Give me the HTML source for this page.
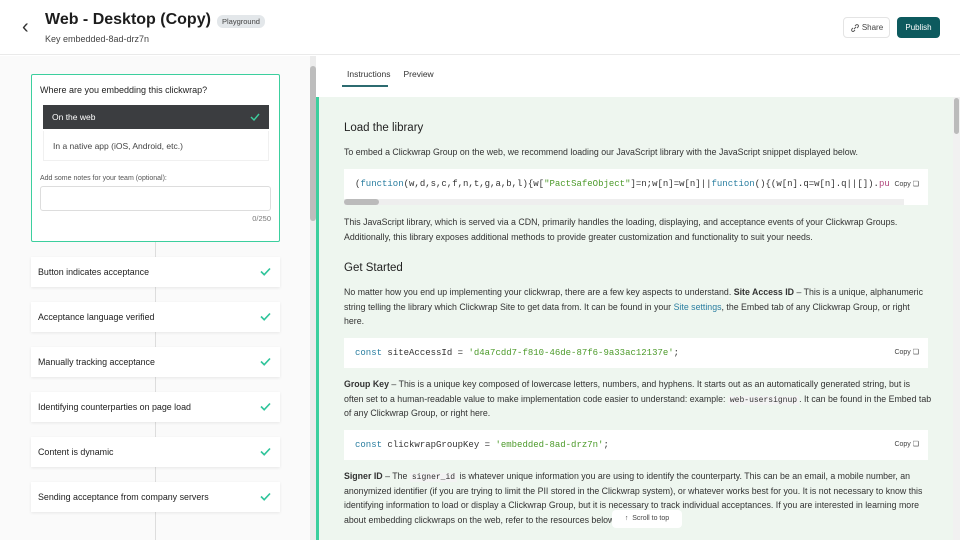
<!DOCTYPE html>
<html><head><meta charset="utf-8"><style>
*{box-sizing:border-box;margin:0;padding:0}
body{width:960px;height:540px;overflow:hidden;background:#fff;font-family:"Liberation Sans",sans-serif;color:#222;position:relative}
.hdr{position:absolute;left:0;top:0;width:960px;height:55px;border-bottom:1px solid #eaeaea;background:#fff}
.back{position:absolute;left:22px;top:16px;font-size:20px;color:#333}
.title{position:absolute;left:45px;top:11px;font-size:16px;font-weight:bold;color:#1d1d1d}
.badge{position:absolute;left:217px;top:15px;background:#e3e7ea;color:#444;font-size:7.5px;padding:2px 5px;border-radius:6px}
.key{position:absolute;left:45px;top:34px;font-size:9px;color:#444}
.share{position:absolute;left:843px;top:17px;width:47px;height:21px;border:1px solid #e4e4e4;border-radius:4px;font-size:8px;color:#444;line-height:19px;text-align:center;padding-left:12px}
.pub{position:absolute;left:897px;top:17px;width:43px;height:21px;background:#0d5a5e;border-radius:4px;font-size:8px;color:#fff;line-height:21px;text-align:center}
.left{position:absolute;left:0;top:56px;width:310px;height:484px;background:#fafafa}
.sb1{position:absolute;left:310px;top:66px;width:6px;height:155px;background:#bdbdbd;border-radius:3px}
.sbtrack{position:absolute;left:310px;top:56px;width:6px;height:484px;background:#ececec}
.card{position:absolute;left:31px;top:74px;width:249px;height:168px;border:1.5px solid #3ccf9e;background:#fff;border-radius:2px}
.card .q{position:absolute;left:8px;top:10px;font-size:9px;color:#222}
.opt1{position:absolute;left:11px;top:30px;width:226px;height:24px;background:#3b3d40;color:#fff;font-size:8.5px;line-height:24px;padding-left:9px}
.opt2{position:absolute;left:11px;top:56px;width:226px;height:30px;color:#444;font-size:8.5px;line-height:30px;padding-left:9px;border:1px solid #f0f0f0;border-top:none}
.notes{position:absolute;left:8px;top:100px;font-size:7px;color:#555}
.ta{position:absolute;left:8px;top:111px;width:231px;height:25px;border:1px solid #ddd;border-radius:3px}
.cnt{position:absolute;right:8px;top:139px;font-size:7.5px;color:#777}
.vline{position:absolute;left:155px;top:242px;width:1px;height:298px;background:#ddd}
.item{position:absolute;left:31px;width:249px;height:30px;background:#fff;box-shadow:0 1px 3px rgba(0,0,0,.08);font-size:8.9px;color:#222;line-height:30px;padding-left:7px}
.item svg{position:absolute;right:9px;top:10px}
.tabs{position:absolute;left:342px;top:69px;font-size:8.5px;color:#333}
.tabline{position:absolute;left:342px;top:85px;width:46px;height:2px;background:#2c6b70}
.main{position:absolute;left:316px;top:97px;width:637px;height:443px;background:#eef6ef;border-left:3px solid #3ccf9e}
.rsb{position:absolute;left:953px;top:97px;width:7px;height:443px;background:#f1f1f1}
.rsb div{width:5px;height:36px;background:#bbb;border-radius:3px;margin:1px}
.m{position:absolute;left:344px;font-size:8.8px;color:#333;line-height:14.5px;width:588px}
h2{position:absolute;left:344px;font-size:11.5px;font-weight:normal;color:#222}
.code{position:absolute;left:344px;width:584px;background:#fff;font-family:"Liberation Mono",monospace;font-size:9px;color:#333;padding-left:11px;white-space:nowrap;overflow:hidden}
.copy{position:absolute;right:9px;font-family:"Liberation Sans",sans-serif;font-size:7px;color:#444;background:#fff;padding-left:4px}
.kw{color:#2a7ea0}.st{color:#4c9a2a}.pk{color:#b0457a}
.ic{font-family:"Liberation Mono",monospace;background:#f3f3f3;padding:0 2px;font-size:8px;line-height:1}
.stt{position:absolute;left:612px;top:510px;width:70px;height:18px;background:#fff;border-radius:4px;font-size:7px;color:#444;line-height:18px;text-align:center}
</style></head><body>
<div class="hdr">
<div class="back">&#8249;</div>
<div class="title">Web - Desktop (Copy)</div>
<div class="badge">Playground</div>
<div class="key">Key embedded-8ad-drz7n</div>
<div class="share"><svg style="position:absolute;left:7px;top:6px" width="8" height="8"><path d="M3 5l2-2M2 4l-1 1a1.4 1.4 0 002 2l1-1M6 4l1-1a1.4 1.4 0 00-2-2L4 2" stroke="#555" stroke-width=".9" fill="none"/></svg>Share</div>
<div class="pub">Publish</div>
</div>
<div class="left"></div>
<div class="sbtrack"></div><div class="sb1"></div>
<div class="vline"></div>
<div class="card">
<div class="q">Where are you embedding this clickwrap?</div>
<div class="opt1">On the web<svg style="position:absolute;right:9px;top:8px" width="10" height="8"><path d="M1 4l3 3 5-6" stroke="#3ccf9e" stroke-width="1.4" fill="none"/></svg></div>
<div class="opt2">In a native app (iOS, Android, etc.)</div>
<div class="notes">Add some notes for your team (optional):</div>
<div class="ta"></div>
<div class="cnt">0/250</div>
</div>
<div class="item" style="top:257px">Button indicates acceptance<svg width="11" height="9"><path d="M1 4.5l3.2 3.2L10 1.5" stroke="#2ec49a" stroke-width="1.6" fill="none"/></svg></div>
<div class="item" style="top:302px">Acceptance language verified<svg width="11" height="9"><path d="M1 4.5l3.2 3.2L10 1.5" stroke="#2ec49a" stroke-width="1.6" fill="none"/></svg></div>
<div class="item" style="top:347px">Manually tracking acceptance<svg width="11" height="9"><path d="M1 4.5l3.2 3.2L10 1.5" stroke="#2ec49a" stroke-width="1.6" fill="none"/></svg></div>
<div class="item" style="top:392px">Identifying counterparties on page load<svg width="11" height="9"><path d="M1 4.5l3.2 3.2L10 1.5" stroke="#2ec49a" stroke-width="1.6" fill="none"/></svg></div>
<div class="item" style="top:437px">Content is dynamic<svg width="11" height="9"><path d="M1 4.5l3.2 3.2L10 1.5" stroke="#2ec49a" stroke-width="1.6" fill="none"/></svg></div>
<div class="item" style="top:482px">Sending acceptance from company servers<svg width="11" height="9"><path d="M1 4.5l3.2 3.2L10 1.5" stroke="#2ec49a" stroke-width="1.6" fill="none"/></svg></div>
<div class="tabs"><span style="margin-left:5px">Instructions</span><span style="margin-left:13px">Preview</span></div>
<div class="tabline"></div>
<div class="main"></div>
<div class="rsb"><div></div></div>
<h2 style="top:122px">Load the library</h2>
<div class="m" style="top:145px">To embed a Clickwrap Group on the web, we recommend loading our JavaScript library with the JavaScript snippet displayed below.</div>
<div class="code" style="top:169px;height:36px;line-height:31px">(<span class="kw">function</span>(w,d,s,c,f,n,t,g,a,b,l){w[<span class="st">"PactSafeObject"</span>]=n;w[n]=w[n]||<span class="kw">function</span>(){(w[n].q=w[n].q||[]).<span class="pk">push</span>
<span class="copy" style="top:0">Copy &#10063;</span>
<div style="position:absolute;left:0;bottom:0;width:560px;height:6px;background:#eee"><div style="width:35px;height:6px;background:#bbb;border-radius:3px"></div></div></div>
<div class="m" style="top:215px">This JavaScript library, which is served via a CDN, primarily handles the loading, displaying, and acceptance events of your Clickwrap Groups. Additionally, this library exposes additional methods to provide greater customization and functionality to suit your needs.</div>
<h2 style="top:262px">Get Started</h2>
<div class="m" style="top:285px">No matter how you end up implementing your clickwrap, there are a few key aspects to understand. <b>Site Access ID</b> – This is a unique, alphanumeric string telling the library which Clickwrap Site to get data from. It can be found in your <span style="color:#2a7ea0">Site settings</span>, the Embed tab of any Clickwrap Group, or right here.</div>
<div class="code" style="top:338px;height:30px;line-height:30px"><span class="kw">const</span> siteAccessId = <span class="st">'d4a7cdd7-f810-46de-87f6-9a33ac12137e'</span>;<span class="copy">Copy &#10063;</span></div>
<div class="m" style="top:377px"><b>Group Key</b> – This is a unique key composed of lowercase letters, numbers, and hyphens. It starts out as an automatically generated string, but is often set to a human-readable value to make implementation code easier to understand: example: <span class="ic">web-usersignup</span>. It can be found in the Embed tab of any Clickwrap Group, or right here.</div>
<div class="code" style="top:430px;height:30px;line-height:30px"><span class="kw">const</span> clickwrapGroupKey = <span class="st">'embedded-8ad-drz7n'</span>;<span class="copy">Copy &#10063;</span></div>
<div class="m" style="top:469px"><b>Signer ID</b> – The <span class="ic">signer_id</span> is whatever unique information you are using to identify the counterparty. This can be an email, a mobile number, an anonymized identifier (if you are trying to limit the PII stored in the Clickwrap system), or whatever works best for you. It is not necessary to know this identifying information to load or display a Clickwrap Group, but it is necessary to track individual acceptances. If you are interested in learning more about embedding clickwraps on the web, refer to the resources below.</div>
<div class="stt">&#8593;&nbsp; Scroll to top</div>
</body></html>
